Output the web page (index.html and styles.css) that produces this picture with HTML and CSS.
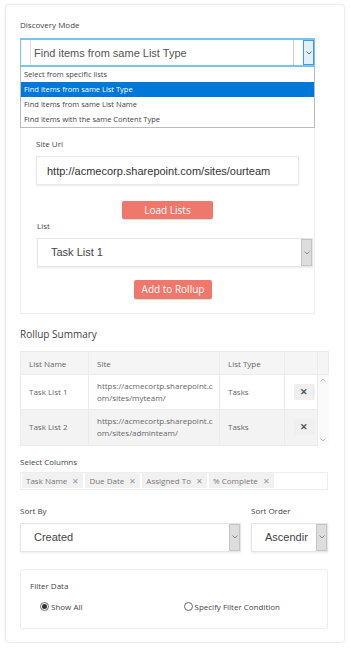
FILE: index.html
```html
<!DOCTYPE html>
<html lang="en">
<head>
    <meta charset="UTF-8">
    <meta name="viewport" content="width=device-width, initial-scale=1.0">
    <title>List Rollup Settings</title>
    <link rel="stylesheet" href="styles.css">
</head>
<body>
    <div class="card">
        <!-- Discovery mode with the open dropdown -->
        <div class="label">Discovery Mode</div>
        <div class="narrow">
            <div class="select select-open">
                <div class="select-value">Find items from same List Type</div>
                <div class="select-btn btn-blue">
                    <svg width="6" height="4" viewBox="0 0 6 4"><path d="M0.5 0.5 L3 3 L5.5 0.5" fill="none" stroke="#666" stroke-width="1"/></svg>
                </div>
            </div>
            <ul class="options">
                <li>Select from specific lists</li>
                <li class="active">Find items from same List Type</li>
                <li>Find items from same List Name</li>
                <li>Find items with the same Content Type</li>
            </ul>

            <div class="panel">
                <div class="label">Site Url</div>
                <div class="input">http://acmecorp.sharepoint.com/sites/ourteam</div>
                <div class="center"><span class="button btn-load">Load Lists</span></div>
                <div class="label label-list">List</div>
                <div class="select select-list">
                    <div class="select-text">Task List 1</div>
                    <div class="select-btn">
                        <svg width="6" height="4" viewBox="0 0 6 4"><path d="M0.5 0.5 L3 3 L5.5 0.5" fill="none" stroke="#888" stroke-width="1"/></svg>
                    </div>
                </div>
                <div class="center"><span class="button btn-add">Add to Rollup</span></div>
            </div>
        </div>

        <h2>Rollup Summary</h2>
        <table class="summary">
            <thead>
                <tr>
                    <th class="c-name">List Name</th>
                    <th class="c-site">Site</th>
                    <th class="c-type">List Type</th>
                    <th class="c-del"></th>
                    <th class="c-scroll"></th>
                </tr>
            </thead>
            <tbody>
                <tr>
                    <td>Task List 1</td>
                    <td class="site">https://acmecortp.sharepoint.com/sites/myteam/</td>
                    <td>Tasks</td>
                    <td class="del"><span class="x-btn">✕</span></td>
                    <td class="scroll" rowspan="2">
                        <div class="scroll-inner">
                            <svg width="6" height="4" viewBox="0 0 6 4"><path d="M0.5 3.5 L3 1 L5.5 3.5" fill="none" stroke="#bbb" stroke-width="1"/></svg>
                            <svg width="6" height="4" viewBox="0 0 6 4"><path d="M0.5 0.5 L3 3 L5.5 0.5" fill="none" stroke="#bbb" stroke-width="1"/></svg>
                        </div>
                    </td>
                </tr>
                <tr class="alt">
                    <td>Task List 2</td>
                    <td class="site">https://acmecortp.sharepoint.com/sites/adminteam/</td>
                    <td>Tasks</td>
                    <td class="del"><span class="x-btn">✕</span></td>
                </tr>
            </tbody>
        </table>

        <div class="label label-cols">Select Columns</div>
        <div class="tags">
            <span class="tag">Task Name <i>✕</i></span>
            <span class="tag">Due Date <i>✕</i></span>
            <span class="tag">Assigned To <i>✕</i></span>
            <span class="tag">% Complete <i>✕</i></span>
        </div>

        <div class="sort-row">
            <div class="sort-by">
                <div class="label">Sort By</div>
                <div class="select select-grey">
                    <div class="select-text">Created</div>
                    <div class="select-btn">
                        <svg width="6" height="4" viewBox="0 0 6 4"><path d="M0.5 0.5 L3 3 L5.5 0.5" fill="none" stroke="#888" stroke-width="1"/></svg>
                    </div>
                </div>
            </div>
            <div class="sort-order">
                <div class="label">Sort Order</div>
                <div class="select select-grey">
                    <div class="select-text">Ascending</div>
                    <div class="select-btn">
                        <svg width="6" height="4" viewBox="0 0 6 4"><path d="M0.5 0.5 L3 3 L5.5 0.5" fill="none" stroke="#888" stroke-width="1"/></svg>
                    </div>
                </div>
            </div>
        </div>

        <div class="filter">
            <div class="label">Filter Data</div>
            <div class="radios">
                <label class="radio"><span class="dot checked"></span>Show All</label>
                <label class="radio"><span class="dot"></span>Specify Filter Condition</label>
            </div>
        </div>
    </div>
</body>
</html>
```

FILE: styles.css
```css
/* Grundstile */
* {
    box-sizing: border-box;
    margin: 0;
    padding: 0;
}

body {
    font-family: 'Open Sans', sans-serif;
    font-size: 8px;
    color: #555;
    background: #fff;
}

.card {
    margin: 4px 5px 0 5px;
    width: 340px;
    height: 639px;
    border: 1px solid #ececec;
    border-radius: 4px;
    box-shadow: 0 0 3px rgba(0, 0, 0, 0.06);
    padding: 14px 16px 0 14px;
}

.label {
    font-size: 8px;
    line-height: 12px;
    color: #444;
}

.narrow {
    width: 295px;
    margin-top: 7px;
}

/* Auswahlfelder */
.select {
    display: flex;
    align-items: stretch;
    height: 29px;
    background: #fff;
}

.select-open {
    border: 1px solid #7cc3ea;
    border-top-width: 2px;
    border-bottom-width: 2px;
    padding-left: 9px;
}

.select-value {
    flex: 1;
    border-left: 1px solid #ddd;
    border-right: 1px solid #ccc;
    font-family: 'Liberation Sans', Arial, sans-serif;
    font-size: 11px;
    color: #555;
    padding-left: 3px;
    display: flex;
    align-items: center;
    margin-right: 9px;
}

.select-btn {
    width: 11px;
    flex: none;
    display: flex;
    align-items: center;
    justify-content: center;
    background: #ddd;
    border: 1px solid #c4c4c4;
}

.btn-blue {
    background: #e3f0fb;
    border: 1px solid #3d9ae3;
}

.select-text {
    flex: 1;
    min-width: 0;
    font-family: 'Liberation Sans', Arial, sans-serif;
    font-size: 11px;
    color: #444;
    line-height: 27px;
    padding-left: 13px;
    overflow: hidden;
    white-space: nowrap;
}

.sort-order .select-text {
    margin-right: 8px;
}

.options {
    list-style: none;
    border: 1px solid #bbb;
    border-top: none;
}

.options li {
    height: 15px;
    line-height: 15px;
    padding-left: 3px;
    font-size: 7.5px;
    color: #444;
}

.options li.active {
    background: #0078d7;
    color: #fff;
}

/* Innere Box */
.panel {
    border: 1px solid #eee;
    border-top: none;
    padding: 10px 0 14px 15px;
    height: 186px;
}

.input {
    margin-top: 6px;
    width: 263px;
    height: 29px;
    border: 1px solid #e8e8e8;
    box-shadow: 0 1px 2px rgba(0, 0, 0, 0.08);
    font-family: 'Liberation Sans', Arial, sans-serif;
    font-size: 11px;
    color: #333;
    padding-left: 10px;
    display: flex;
    align-items: center;
}

.center {
    text-align: center;
    width: 263px;
}

.button {
    display: inline-block;
    background: #f0776c;
    color: #fff;
    font-size: 10px;
    border-radius: 2px;
    box-shadow: 0 1px 1px rgba(0, 0, 0, 0.15);
    height: 18px;
    line-height: 18px;
}

.btn-load {
    margin-top: 16px;
    width: 91px;
}

.btn-add {
    margin-top: 13px;
    width: 78px;
    height: 19px;
    line-height: 19px;
    margin-left: 11px;
}

.label-list {
    margin-top: 1px;
    padding-left: 1px;
}

.select-list {
    margin-top: 6px;
    margin-left: 1px;
    width: 276px;
    border: 1px solid #e6e6e6;
    box-shadow: 0 1px 2px rgba(0, 0, 0, 0.08);
}

h2 {
    font-weight: normal;
    font-size: 10px;
    color: #444;
    margin-top: 13px;
    line-height: 14px;
}

/* Tabelle */
.summary {
    margin-top: 10px;
    width: 308px;
    border-collapse: collapse;
    table-layout: fixed;
    font-size: 8px;
    color: #666;
}

.summary th {
    height: 23px;
    background: #f5f5f5;
    font-weight: normal;
    text-align: left;
    padding-left: 8px;
    border: 1px solid #ebebeb;
}

.c-name { width: 68px; }
.c-site { width: 131px; }
.c-type { width: 65px; }
.c-del { width: 33px; }
.c-scroll { width: 11px; }

.summary td {
    height: 35px;
    padding-left: 8px;
    border: 1px solid #ebebeb;
    line-height: 12px;
}

.summary tr.alt td {
    background: #f3f3f3;
}

.summary td.site {
    padding-right: 3px;
    word-break: break-all;
}

.summary td.del {
    padding-left: 0;
    text-align: center;
}

.x-btn {
    display: inline-block;
    width: 21px;
    height: 16px;
    line-height: 16px;
    text-align: center;
    background: #efefef;
    border-radius: 2px;
    font-size: 9px;
    font-weight: bold;
    color: #555;
    margin-left: 6px;
}

.summary td.scroll {
    padding: 0;
    background: #fafafa;
    border: none;
}

.scroll-inner {
    display: flex;
    flex-direction: column;
    justify-content: space-between;
    align-items: center;
    height: 70px;
    padding: 3px 0;
}

.label-cols {
    margin-top: 10px;
}

.tags {
    margin-top: 4px;
    width: 308px;
    height: 18px;
    border: 1px solid #eee;
    display: flex;
    align-items: center;
    gap: 2px;
    padding-left: 1px;
}

.tag {
    background: #f1f1f1;
    color: #777;
    font-size: 8px;
    height: 15px;
    line-height: 15px;
    padding: 0 4px;
}

.tag i {
    font-style: normal;
    color: #999;
    margin-left: 3px;
}

/* Sortierung */
.sort-row {
    display: flex;
    gap: 10px;
    margin-top: 15px;
    width: 308px;
}

.sort-by { width: 221px; }
.sort-order { width: 77px; }

.select-grey {
    margin-top: 6px;
    border: 1px solid #e6e6e6;
    box-shadow: 0 1px 2px rgba(0, 0, 0, 0.08);
}

/* Filter */
.filter {
    margin-top: 17px;
    width: 308px;
    height: 60px;
    border: 1px solid #eee;
    border-radius: 2px;
    padding: 10px 0 0 9px;
}

.radios {
    display: flex;
    margin-top: 9px;
    padding-left: 10px;
}

.radio {
    display: flex;
    align-items: center;
    font-size: 8px;
    color: #444;
    width: 144px;
}

.dot {
    width: 9px;
    height: 9px;
    border: 1px solid #666;
    border-radius: 50%;
    margin-right: 2px;
    display: flex;
    align-items: center;
    justify-content: center;
}

.dot.checked::after {
    content: "";
    width: 5px;
    height: 5px;
    border-radius: 50%;
    background: #333;
}
```
